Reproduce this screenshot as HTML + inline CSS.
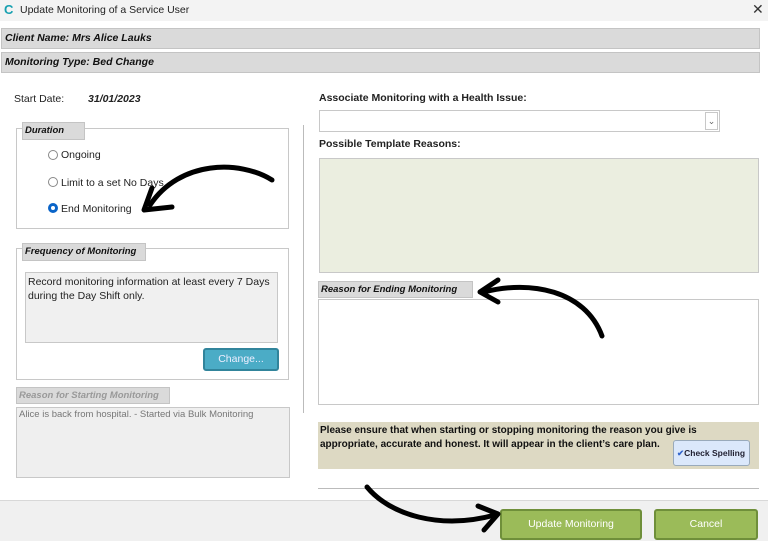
<!DOCTYPE html>
<html><head><style>
*{box-sizing:border-box;margin:0;padding:0}
body{width:768px;height:541px;overflow:hidden;background:#fff;font-family:"Liberation Sans",sans-serif;font-size:10.5px;color:#222;position:relative}
.a{position:absolute;white-space:nowrap}
.bar{background:#dadada;border:1px solid #c4c4c4;font-weight:bold;font-style:italic;font-size:10.5px;padding:3px 3px;color:#111}
.box{border:1px solid #c8c8c8}
.tab{background:#dadada;border:1px solid #c4c4c4;font-weight:bold;font-style:italic;font-size:9.5px;padding:2px 2px;color:#111;overflow:hidden}
.rad{width:10px;height:10px;border:1px solid #888;border-radius:50%;background:#fff}
.btn{background:#9bbb59;border:2px solid #6f8f3a;border-radius:3px;color:#fff;text-align:center;font-size:10.5px}
</style></head><body>
<div class="a" style="left:0;top:0;width:768px;height:21px;background:#f3f3f3"></div>
<div class="a" style="left:4px;top:2px;font-weight:bold;color:#17a0b0;font-size:13px">C</div>
<div class="a" style="left:20px;top:4px;font-size:10.5px;color:#222">Update Monitoring of a Service User</div>
<div class="a" style="left:752px;top:1px;font-size:14px;color:#333">✕</div>
<div class="a bar" style="left:1px;top:28px;width:759px;height:21px">Client Name: Mrs Alice Lauks</div>
<div class="a bar" style="left:1px;top:52px;width:759px;height:21px">Monitoring Type: Bed Change</div>
<div class="a" style="left:14px;top:93px">Start Date:</div>
<div class="a" style="left:88px;top:93px;font-weight:bold;font-style:italic">31/01/2023</div>
<div class="a box" style="left:16px;top:128px;width:273px;height:101px"></div>
<div class="a tab" style="left:22px;top:122px;width:63px;height:18px">Duration</div>
<div class="a rad" style="left:48px;top:150px"></div><div class="a" style="left:61px;top:149px">Ongoing</div>
<div class="a rad" style="left:48px;top:177px"></div><div class="a" style="left:61px;top:177px">Limit to a set No Days</div>
<div class="a rad" style="left:48px;top:203px;border:3px solid #0a64c8"></div><div class="a" style="left:61px;top:203px">End Monitoring</div>
<div class="a box" style="left:16px;top:248px;width:273px;height:132px"></div>
<div class="a tab" style="left:22px;top:243px;width:124px;height:18px">Frequency of Monitoring</div>
<div class="a box" style="left:25px;top:272px;width:253px;height:71px;background:#f0f0f0;padding:2px 2px;line-height:14px;white-space:normal">Record monitoring information at least every 7 Days during the Day Shift only.</div>
<div class="a" style="left:203px;top:348px;width:76px;height:23px;background:#4bacc6;border:2px solid #31849b;border-radius:3px;color:#eef;text-align:center;line-height:19px">Change...</div>
<div class="a tab" style="left:16px;top:387px;width:154px;height:17px;color:#999">Reason for Starting Monitoring</div>
<div class="a box" style="left:16px;top:407px;width:274px;height:71px;background:#efefef;color:#777;font-size:9.5px;padding:1px 2px">Alice is back from hospital. - Started via Bulk Monitoring</div>
<div class="a" style="left:303px;top:125px;width:1px;height:288px;background:#bbb"></div>
<div class="a" style="left:319px;top:92px;font-weight:bold">Associate Monitoring with a Health Issue:</div>
<div class="a box" style="left:319px;top:110px;width:401px;height:22px"></div>
<div class="a box" style="left:705px;top:112px;width:13px;height:18px;font-size:9px;color:#666;text-align:center;line-height:16px">⌄</div>
<div class="a" style="left:319px;top:138px;font-weight:bold">Possible Template Reasons:</div>
<div class="a box" style="left:319px;top:158px;width:440px;height:115px;background:#ebeee0"></div>
<div class="a tab" style="left:318px;top:281px;width:155px;height:17px">Reason for Ending Monitoring</div>
<div class="a box" style="left:318px;top:299px;width:441px;height:106px"></div>
<div class="a" style="left:318px;top:422px;width:441px;height:47px;background:#ddd9c3;font-weight:bold;font-size:10px;padding:2px 2px;line-height:14px;color:#111">Please ensure that when starting or stopping monitoring the reason you give is<br>appropriate, accurate and honest. It will appear in the client’s care plan.</div>
<div class="a" style="left:673px;top:440px;width:77px;height:26px;background:#dbe8fb;border:1px solid #9ab;border-radius:3px;font-size:8.5px;font-weight:bold;color:#223;line-height:24px;padding-left:3px"><span style="color:#36c">✔</span>Check Spelling</div>
<div class="a" style="left:318px;top:488px;width:441px;height:1px;background:#bbb"></div>
<div class="a" style="left:0;top:500px;width:768px;height:41px;background:#f0f0f0;border-top:1px solid #d8d8d8"></div>
<div class="a btn" style="left:500px;top:509px;width:142px;height:31px;line-height:27px">Update Monitoring</div>
<div class="a btn" style="left:654px;top:509px;width:104px;height:31px;line-height:27px">Cancel</div>
<svg class="a" style="left:0;top:0" width="768" height="541" fill="none" stroke="#000" stroke-width="5" stroke-linecap="round" stroke-linejoin="round">
<path d="M272 180 C240 160 180 160 150 205"/><path d="M152 188 L144 210 L172 207"/>
<path d="M602 336 C585 290 530 280 484 292"/><path d="M498 280 L480 292 L498 302"/>
<path d="M367 487 C390 515 440 530 495 515"/><path d="M478 506 L498 514 L484 530"/>
</svg>
</body></html>
